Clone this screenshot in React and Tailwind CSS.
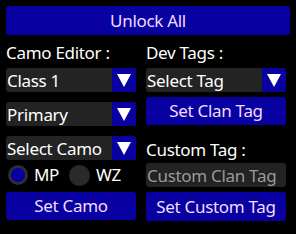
const font = { fontFamily: '"Noto Sans", "Open Sans", sans-serif' }

function Arrow() {
  return (
    <div className="w-6 h-full bg-[#0800a0] rounded-r-[3px] flex items-center justify-center">
      <svg width="14" height="13" viewBox="0 0 14 13"><polygon points="0,0 14,0 7,13" fill="#fff" /></svg>
    </div>
  )
}

function Select({ label }) {
  return (
    <div className="h-6 flex bg-[#232323] rounded-[3px]">
      <span className="flex-1 pl-[1px] text-white text-[17px] tracking-[-0.3px] leading-[25px] truncate">{label}</span>
      <Arrow />
    </div>
  )
}

function Button({ children, h = 'h-7' }) {
  return (
    <div className={`${h} bg-[#0800a0] rounded-[3px] flex items-center justify-center text-[#f2dcff] text-[17px] tracking-[-0.3px]`}>
      {children}
    </div>
  )
}

export default function App() {
  return (
    <div style={font} className="w-[296px] h-[234px] bg-black p-[6px] flex flex-col">
      <div className="h-[29px] bg-[#0800a0] rounded-[3px] flex items-center justify-center text-[#f2dcff] text-[17px] tracking-[-0.3px]">
        Unlock All
      </div>
      <div className="flex gap-[10px] mt-[7px]">
        <div className="w-[130px] flex flex-col">
          <div className="h-[22px] text-white text-[17px] tracking-[-0.3px] leading-[22px]">Camo Editor :</div>
          <div className="mt-1"><Select label="Class 1" /></div>
          <div className="mt-[10px]"><Select label="Primary" /></div>
          <div className="mt-[10px]"><Select label="Select Camo" /></div>
          <div className="mt-[5px] h-5 flex items-center text-white text-[17px] tracking-[-0.3px]">
            <div className="ml-[2px] w-5 h-5 rounded-full bg-[#2e2e2e] flex items-center justify-center">
              <div className="w-[14px] h-[14px] rounded-full bg-[#0800a0]" />
            </div>
            <span className="ml-[6px]">MP</span>
            <div className="ml-[10px] w-[21px] h-[21px] rounded-full bg-[#2a2a2a]" />
            <span className="ml-[6px]">WZ</span>
          </div>
          <div className="mt-[7px]"><Button>Set Camo</Button></div>
        </div>
        <div className="w-[140px] flex flex-col">
          <div className="h-[22px] text-white text-[17px] tracking-[-0.3px] leading-[22px]">Dev Tags :</div>
          <div className="mt-1"><Select label="Select Tag" /></div>
          <div className="mt-[5px]"><Button>Set Clan Tag</Button></div>
          <div className="mt-[14px] h-[22px] text-white text-[17px] tracking-[-0.3px] leading-[22px]">Custom Tag :</div>
          <div className="mt-[2px] h-6 bg-[#232323] rounded-[3px] text-[#9a9a9a] text-[17px] tracking-[-0.3px] leading-[25px] pl-[1px] overflow-hidden whitespace-nowrap">Custom Clan Tag</div>
          <div className="mt-[5px]"><Button h="h-[29px]">Set Custom Tag</Button></div>
        </div>
      </div>
    </div>
  )
}
